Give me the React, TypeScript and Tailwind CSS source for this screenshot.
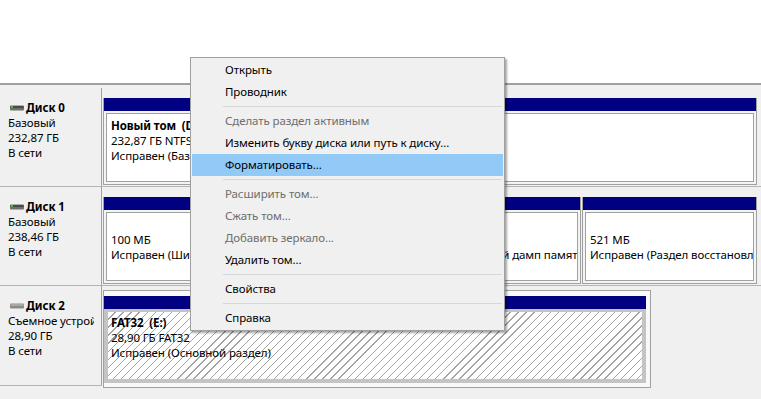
import React from "react";

const FONT = "font-['Noto_Sans','Open_Sans',sans-serif]";

function DriveIcon({ removable }: { removable?: boolean }) {
  return (
    <svg width="14" height="6" viewBox="0 0 14 6" className="mr-[2px] mt-[1px]">
      <rect x="0" y="0.5" width="14" height="5" rx="1" fill={removable ? "#8a8a8a" : "#6f6f6f"} />
      <rect x="0.5" y="1" width="13" height="2" fill={removable ? "#a8a8a8" : "#4a4a4a"} />
      {!removable && <rect x="1" y="1" width="2" height="2" fill="#37c837" />}
    </svg>
  );
}

function Label({ name, lines, removable }: { name: string; lines: string[]; removable?: boolean }) {
  return (
    <div className="w-[102px] shrink-0 border-r border-[#a0a0a0] pl-[8px] pt-[12px] leading-[15px]">
      <div className="w-[86px] overflow-hidden whitespace-nowrap">
        <div className="flex items-center font-bold pl-[2px]">
          <DriveIcon removable={removable} />
          <span>{name}</span>
        </div>
        {lines.map((l) => (
          <div key={l}>{l}</div>
        ))}
      </div>
    </div>
  );
}

function Partition({
  width,
  title,
  lines,
}: {
  width: string;
  title?: string;
  lines: string[];
}) {
  return (
    <div className={`${width} h-[87px] shrink-0 flex flex-col border-l border-r border-b border-[#a0a0a0] bg-[#f4f4f4]`}>
      <div className="h-[13px] bg-[#000080] shrink-0" />
      <div className="flex-1 p-[2px] flex min-w-0">
        <div className="flex-1 min-w-0 bg-white border border-[#a0a0a0] pl-[4px] pt-[4px] leading-[15px] overflow-hidden whitespace-pre">
          <div className="font-bold h-[15px]">{title ?? ""}</div>
          {lines.map((l) => (
            <div key={l}>{l}</div>
          ))}
        </div>
      </div>
    </div>
  );
}

type Item = { t: string; d?: boolean; h?: boolean } | "sep";

const items: Item[] = [
  { t: "Открыть" },
  { t: "Проводник" },
  "sep",
  { t: "Сделать раздел активным", d: true },
  { t: "Изменить букву диска или путь к диску..." },
  { t: "Форматировать...", h: true },
  "sep",
  { t: "Расширить том...", d: true },
  { t: "Сжать том...", d: true },
  { t: "Добавить зеркало...", d: true },
  { t: "Удалить том..." },
  "sep",
  { t: "Свойства" },
  "sep",
  { t: "Справка" },
];

export default function App() {
  return (
    <div className={`relative w-[761px] h-[399px] overflow-hidden bg-[#f0f0f0] text-[11.5px] tracking-[-0.1px] text-black ${FONT}`}>
      <div className="h-[83px] bg-white" />
      <div className="h-[2px] bg-[#a0a0a0]" />
      <div className="h-[3px]" />

      {/* Disk 0 */}
      <div className="flex h-[99px] border-b border-[#b4b4b4]">
        <Label name="Диск 0" lines={["Базовый", "232,87 ГБ", "В сети"]} />
        <div className="flex pl-[1px] pt-[10px]">
          <Partition width="w-[654px]" title="Новый том  (D:)" lines={["232,87 ГБ NTFS", "Исправен (Базовый раздел данных)"]} />
        </div>
      </div>

      {/* Disk 1 */}
      <div className="flex h-[99px] border-b border-[#b4b4b4]">
        <Label name="Диск 1" lines={["Базовый", "238,46 ГБ", "В сети"]} />
        <div className="flex pl-[1px] pt-[10px] gap-[1px]">
          <Partition width="w-[130px]" lines={["100 МБ", "Исправен (Шифрованный (EFI) системный раздел)"]} />
          <Partition
            width="w-[347px]"
            title="(C:)"
            lines={["237,85 ГБ NTFS", "Исправен (Загрузка, Файл подкачки, Аварийный дамп памяти, Основной раздел)"]}
          />
          <Partition width="w-[175px]" lines={["521 МБ", "Исправен (Раздел восстановления)"]} />
        </div>
      </div>

      {/* Disk 2 */}
      <div className="flex h-[103px]">
        <div className="h-[100px] flex border-b border-[#b4b4b4]">
          <Label name="Диск 2" lines={["Съемное устройство", "28,90 ГБ", "В сети"]} removable />
        </div>
        <div className="pl-[1px] pt-[4px]">
          <div className="w-[548px] h-[98px] border border-[#a0a0a0] bg-[#f9f9f9] pt-[5px] pr-[4px] flex flex-col">
            <div className="h-[13px] bg-[#000080] shrink-0" />
            <div className="h-[74px] border-[4px] border-[#c4c4c4] border-t-[3px] bg-[repeating-linear-gradient(135deg,#ffffff_0px,#ffffff_4.8px,#a4a4a4_4.8px,#a4a4a4_5.7px)] pl-[3px] pt-[3px] leading-[15px] overflow-hidden whitespace-pre">
              <div className="font-bold">FAT32  (E:)</div>
              <div>28,90 ГБ FAT32</div>
              <div>Исправен (Основной раздел)</div>
            </div>
          </div>
        </div>
      </div>

      {/* Context menu */}
      <div className="absolute left-[190px] top-[57px] w-[315px] bg-[#f0f0f0] border border-[#a0a0a0] shadow-[2px_2px_2px_rgba(0,0,0,0.35)] p-[1px]">
        {items.map((it, i) =>
          it === "sep" ? (
            <div key={i} className="h-[7px] flex items-center pl-[31px] pr-[1px]">
              <div className="h-px w-full bg-[#d7d7d7]" />
            </div>
          ) : (
            <div
              key={i}
              className={`h-[22px] flex items-center pl-[33px] whitespace-nowrap ${it.h ? "bg-[#91c9f7]" : ""} ${
                it.d ? "text-[#6d6d6d]" : "text-black"
              }`}
            >
              {it.t}
            </div>
          )
        )}
      </div>
    </div>
  );
}
